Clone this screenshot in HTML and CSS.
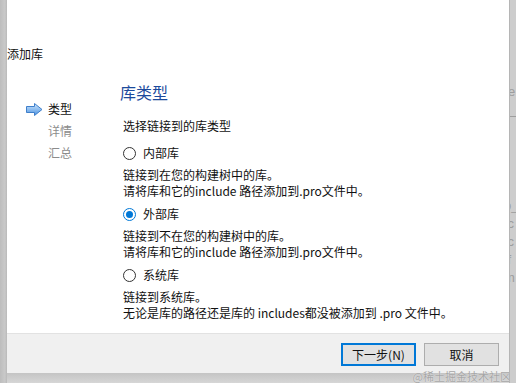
FILE: index.html
```html
<!DOCTYPE html>
<html lang="zh">
<head>
<meta charset="utf-8">
<title>添加库</title>
<link rel="stylesheet" href="styles.css">
</head>
<body>
<div class="screen">
  <div class="left-edge"></div>
  <div class="window">
    <div class="dialog">
      <div class="title">添加库</div>
      <div class="body">
        <nav class="steps">
          <div class="step current">
            <svg class="arrow" width="17" height="13" viewBox="0 0 17 13">
              <defs>
                <linearGradient id="ag" x1="0" y1="0" x2="0" y2="1">
                  <stop offset="0" stop-color="#cfe6fb"/>
                  <stop offset="0.5" stop-color="#8dbdf0"/>
                  <stop offset="1" stop-color="#4a8fdc"/>
                </linearGradient>
              </defs>
              <polygon points="0.5,3.5 8.5,3.5 8.5,0.5 16,6.5 8.5,12.5 8.5,9.5 0.5,9.5" fill="url(#ag)" stroke="#3f7fcb" stroke-width="1" stroke-linejoin="round"/>
            </svg>
            <span>类型</span>
          </div>
          <div class="step">详情</div>
          <div class="step">汇总</div>
        </nav>
        <main class="page">
          <h1 class="heading">库类型</h1>
          <p class="prompt">选择链接到的库类型</p>
          <div class="option">
            <div class="radio-row"><span class="radio"></span><span>内部库</span></div>
            <p class="desc">链接到在您的构建树中的库。<br>请将库和它的include 路径添加到.pro文件中。</p>
          </div>
          <div class="option">
            <div class="radio-row"><span class="radio checked"></span><span>外部库</span></div>
            <p class="desc">链接到不在您的构建树中的库。<br>请将库和它的include 路径添加到.pro文件中。</p>
          </div>
          <div class="option">
            <div class="radio-row"><span class="radio"></span><span>系统库</span></div>
            <p class="desc">链接到系统库。<br>无论是库的路径还是库的 includes都没被添加到 .pro 文件中。</p>
          </div>
        </main>
      </div>
    </div>
    <div class="footer">
      <button class="btn default">下一步(N)</button>
      <button class="btn">取消</button>
    </div>
    <div class="under"><span class="watermark">@稀土掘金技术社区</span></div>
  </div>
  <div class="right-edge">
    <div class="bg-text top">le</div>
    <div class="bg-rule"></div>
    <div class="bg-lines">
      <div>o_</div>
      <div>tc</div>
      <div>tc</div>
      <div>&nbsp;f</div>
      <div>m</div>
    </div>
  </div>
</div>
</body>
</html>
```

FILE: styles.css
```css
* { box-sizing: border-box; }
html, body {
  margin: 0;
  padding: 0;
}
body {
  font-family: "Noto Sans CJK SC", "Noto Sans", sans-serif;
  font-size: 12px;
  color: #111;
  background: #cfcfcf;
}
.screen {
  display: flex;
  width: 516px;
  height: 383px;
  overflow: hidden;
  background: #d2d2d2;
}
.left-edge {
  width: 7px;
  flex: none;
  background: linear-gradient(to right, #bdbdbd, #c9c9c9 70%, #b9b9b9);
}
.window {
  width: 502px;
  flex: none;
  display: flex;
  flex-direction: column;
}
.dialog {
  height: 333px;
  background: #fff;
  flex: none;
}
.title {
  padding-top: 46px;
  line-height: 16px;
  height: 62px;
}
.body {
  display: flex;
  margin-top: 20px;
}
.steps {
  width: 113px;
  flex: none;
  padding-top: 19px;
  padding-left: 19px;
  display: flex;
  flex-direction: column;
  gap: 6px;
}
.step {
  line-height: 16px;
  height: 16px;
  padding-left: 22px;
  color: #8c8c8c;
}
.step.current {
  padding-left: 0;
  color: #111;
  display: flex;
  align-items: center;
}
.arrow {
  margin-right: 5px;
  display: block;
}
.page {
  flex: 1;
  padding-left: 3px;
}
.heading {
  margin: 0 0 0 -3px;
  font-size: 16px;
  line-height: 20px;
  font-weight: normal;
  color: #1c4a9c;
}
.prompt {
  margin: 16px 0 0;
  line-height: 16px;
}
.option {
  margin-top: 11px;
}
.option + .option {
  margin-top: 7px;
}
.radio-row {
  display: flex;
  align-items: center;
  gap: 7px;
  line-height: 16px;
  height: 16px;
}
.radio {
  width: 13px;
  height: 13px;
  border: 1px solid #333;
  border-radius: 50%;
  background: #fff;
  display: flex;
  align-items: center;
  justify-content: center;
  flex: none;
}
.radio.checked {
  border-color: #0078d7;
}
.radio.checked::after {
  content: "";
  width: 7px;
  height: 7px;
  border-radius: 50%;
  background: #0078d7;
}
.desc {
  margin: 6px 0 0;
  line-height: 16px;
}
.footer {
  height: 40px;
  flex: none;
  background: #f0f0f0;
  border-top: 1px solid #e2e2e2;
  display: flex;
  justify-content: flex-end;
  align-items: flex-start;
  gap: 8px;
  padding: 9px 10px 0 0;
}
.btn {
  width: 75px;
  height: 23px;
  font-family: "Noto Sans CJK SC", "Noto Sans", sans-serif;
  font-size: 12px;
  color: #111;
  background: #e1e1e1;
  border: 1px solid #adadad;
  padding: 0;
  line-height: 19px;
}
.btn.default {
  border: 2px solid #0078d7;
}
.under {
  flex: 1;
  background: linear-gradient(to bottom, #c4c4c4, #d6d6d6);
  display: flex;
  justify-content: flex-end;
  overflow: visible;
}
.watermark {
  font-size: 11px;
  line-height: 11px;
  color: #a6a6a6;
  text-shadow: 0 0 1px #f4f4f4;
  margin-top: -2px;
  margin-right: -2px;
  white-space: nowrap;
}
.right-edge {
  width: 7px;
  flex: none;
  background: #cdcdcd;
  border-left: 1px solid #b5b5b5;
  overflow: hidden;
  color: #9d9d9d;
  font-family: "Liberation Sans", sans-serif;
  font-size: 13px;
}
.bg-text.top {
  margin-top: 84px;
  margin-left: -5px;
  line-height: 16px;
  white-space: nowrap;
}
.bg-rule {
  margin-top: 16px;
  height: 1px;
  background: #9e9e9e;
}
.bg-lines {
  margin-top: 80px;
  margin-left: -6px;
  line-height: 18px;
  white-space: nowrap;
}
```
